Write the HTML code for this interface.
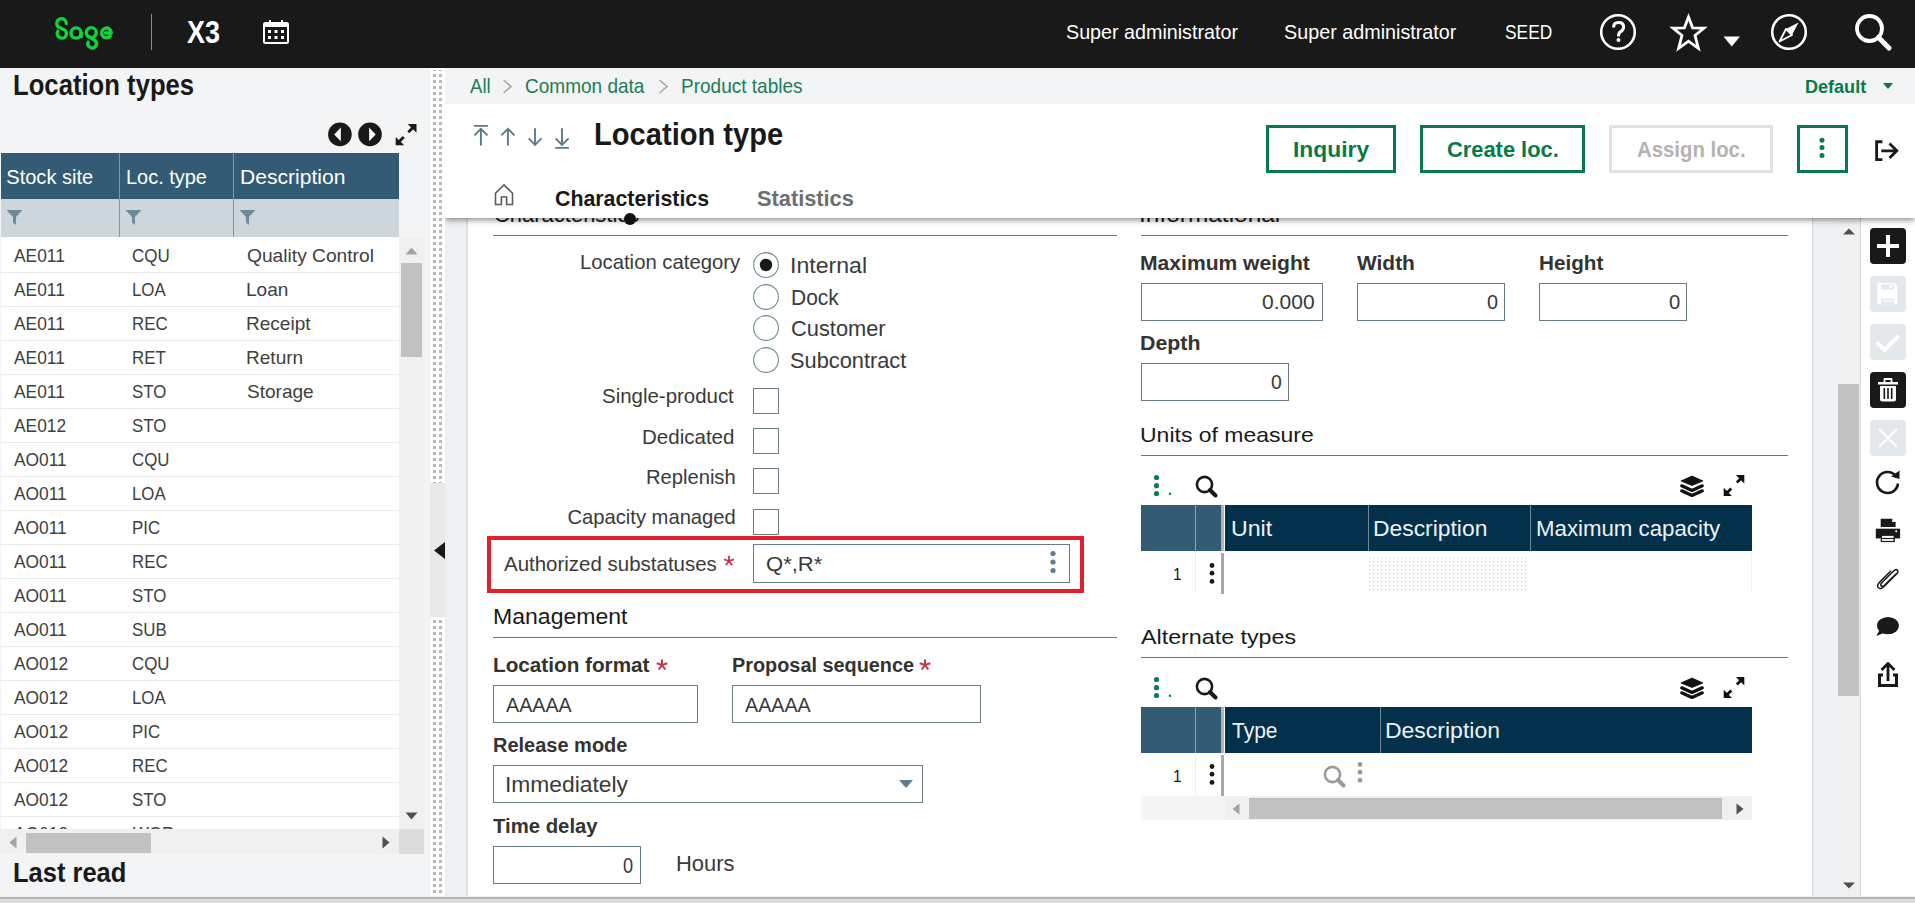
<!DOCTYPE html>
<html><head><meta charset="utf-8">
<style>
*{box-sizing:border-box;margin:0;padding:0}
html,body{width:1915px;height:903px;overflow:hidden;background:#f2f4f5;font-family:"Liberation Sans",sans-serif;color:#333}
.a{position:absolute}
.t{position:absolute;white-space:nowrap;line-height:1;transform-origin:0 0}
#top{left:0;top:0;width:1915px;height:68px;background:#191919}
#top .u{color:#fff;font-size:19px;top:23px}
.lh{color:#fff;font-size:19px;top:16px}
.lr{position:absolute;left:0;width:399px;height:34px;border-bottom:1px solid #ebebeb}
.lr span{position:absolute;top:9px;font-size:17px;line-height:1;color:#333;white-space:nowrap}
.sec{font-size:21px;color:#191919}
.fl{font-size:19.5px;color:#3a3a3a}
.rl{font-size:20px;color:#3a3a3a}
.bl{font-size:19.5px;font-weight:bold;color:#333}
.ast{font-size:24px;font-weight:bold;color:#c7283c}
.cb{width:26px;height:26px;border:1px solid #6c7c84;background:#fff}
.inp{border:1px solid #6c7c84;background:#fff}
.th{font-size:20px;color:#fff}
.rn{font-size:17px;color:#191919}
.bc{font-size:19px;color:#1c7c55}
.btn{border:3px solid #07794a;color:#07794a;font-size:20.5px;font-weight:bold;text-align:center;line-height:42px;background:#fff}
.dis{border-color:#dfe3e6;color:#b3b3b3}
.sb{width:36px;height:36px;border-radius:4px}
.sb svg{display:block}
</style></head><body>
<!-- TOP BAR -->
<div id="top" class="a">
  <svg class="a" style="left:50px;top:12px" width="70" height="42" viewBox="0 0 70 42"><g fill="none" stroke="#0fd53c" stroke-width="3.35" stroke-linecap="round"><path d="M16.3 11.4 A4.8 4.8 0 1 0 8.1 14.8 L15.15 18.35 A4.6 4.6 0 1 1 7.9 19.3"/><circle cx="26" cy="21" r="5.1"/><path d="M31.1 20 V26.3" stroke-linecap="butt"/><circle cx="41.3" cy="20.6" r="4.95"/><path d="M37.8 24.1 L45.24 28.56 A4.3 4.3 0 1 1 38.16 30.13"/><path d="M61.35 20.95 A4.85 4.85 0 1 0 60.2 24.05 M55.6 20.95 H61.35"/></g></svg>
  <div class="a" style="left:151px;top:14px;width:1px;height:36px;background:#8a8a8a"></div>
<div id="tx0" class="t" style="left:186.92px;top:17.16px;font-size:30.52px;font-weight:bold;color:#fff;transform:scaleX(0.8828);">X3</div>
  <svg class="a" style="left:263px;top:19px" width="26" height="26" viewBox="0 0 26 26"><rect x="1" y="4" width="24" height="20" rx="1.5" fill="none" stroke="#fff" stroke-width="2"/><rect x="1" y="4" width="24" height="4" fill="#fff"/><rect x="6" y="1" width="2" height="5" fill="#fff"/><rect x="18" y="1" width="2" height="5" fill="#fff"/><g fill="#fff"><rect x="5" y="11" width="3" height="3"/><rect x="11.5" y="11" width="3" height="3"/><rect x="18" y="11" width="3" height="3"/><rect x="5" y="17" width="3" height="3"/><rect x="11.5" y="17" width="3" height="3"/><rect x="18" y="17" width="3" height="3"/></g></svg>
<div id="tx1" class="t" style="left:1065.74px;top:21.69px;font-size:20.20px;color:#fff;transform:scaleX(0.9761);">Super administrator</div>
<div id="tx2" class="t" style="left:1284.36px;top:21.69px;font-size:20.20px;color:#fff;transform:scaleX(0.9785);">Super administrator</div>
<div id="tx3" class="t" style="left:1505.20px;top:21.69px;font-size:20.20px;color:#fff;transform:scaleX(0.8597);">SEED</div>
</div>

<!-- LEFT PANEL -->
<div id="tx4" class="t" style="left:13.22px;top:70.76px;font-size:28.63px;font-weight:bold;color:#191919;transform:scaleX(0.8968);">Location types</div>
<svg class="a" style="left:327px;top:121px" width="95" height="28" viewBox="0 0 95 28">
 <circle cx="12.9" cy="13.4" r="11.8" fill="#191919"/><path d="M7.2 13.4 L13.8 6.6 L13.8 20.2 Z" fill="#fff"/>
 <circle cx="43" cy="13.4" r="11.8" fill="#191919"/><path d="M48.7 13.4 L42.1 6.6 L42.1 20.2 Z" fill="#fff"/>
 <g fill="#191919"><path d="M89.5 3 L80.7 3 L89.5 11.8 Z"/><path d="M68.7 24.2 L77.2 24.2 L68.7 16 Z"/></g><path d="M86 6.5 L81.3 11.2 M72.3 20.4 L76.8 15.9" stroke="#191919" stroke-width="2.8"/>
</svg>
<div id="lt" class="a" style="left:1px;top:153px;width:398px;height:676px;overflow:hidden;background:#fff">
 <div class="a" style="left:0;top:0;width:398px;height:46px;background:#335b74"></div>
 <div class="a" style="left:0;top:46px;width:398px;height:38px;background:#ccd6dc"></div>
 <div class="a" style="left:118px;top:0;width:1px;height:84px;background:#7e98a8"></div>
 <div class="a" style="left:232px;top:0;width:1px;height:84px;background:#7e98a8"></div>
 <svg class="a" style="left:5px;top:56px" width="17" height="17" viewBox="0 0 17 17"><path d="M0.5 1 H16.5 L10 8 V16 L7 13.5 V8 Z" fill="#6d8a9b"/></svg>
 <svg class="a" style="left:124px;top:56px" width="17" height="17" viewBox="0 0 17 17"><path d="M0.5 1 H16.5 L10 8 V16 L7 13.5 V8 Z" fill="#6d8a9b"/></svg>
 <svg class="a" style="left:238px;top:56px" width="17" height="17" viewBox="0 0 17 17"><path d="M0.5 1 H16.5 L10 8 V16 L7 13.5 V8 Z" fill="#6d8a9b"/></svg>
 <div class="a" style="left:-1px;top:-153px">
<div class="lr" style="top:239px"></div>
<div id="tx5" class="t" style="left:14.46px;top:247.25px;font-size:18.60px;color:#404040;transform:scaleX(0.9335);">AE011</div>
<div id="tx6" class="t" style="left:132.28px;top:247.25px;font-size:18.60px;color:#404040;transform:scaleX(0.9136);">CQU</div>
<div id="tx7" class="t" style="left:246.70px;top:247.25px;font-size:18.60px;color:#404040;transform:scaleX(1.0322);">Quality Control</div>
<div class="lr" style="top:273px"></div>
<div id="tx8" class="t" style="left:14.46px;top:281.25px;font-size:18.60px;color:#404040;transform:scaleX(0.9334);">AE011</div>
<div id="tx9" class="t" style="left:132.18px;top:281.25px;font-size:18.60px;color:#404040;transform:scaleX(0.9050);">LOA</div>
<div id="tx10" class="t" style="left:246.48px;top:281.25px;font-size:18.60px;color:#404040;transform:scaleX(1.0243);">Loan</div>
<div class="lr" style="top:307px"></div>
<div id="tx11" class="t" style="left:14.46px;top:315.25px;font-size:18.60px;color:#404040;transform:scaleX(0.9334);">AE011</div>
<div id="tx12" class="t" style="left:132.18px;top:315.25px;font-size:18.60px;color:#404040;transform:scaleX(0.9050);">REC</div>
<div id="tx13" class="t" style="left:246.48px;top:315.25px;font-size:18.60px;color:#404040;transform:scaleX(1.0243);">Receipt</div>
<div class="lr" style="top:341px"></div>
<div id="tx14" class="t" style="left:14.46px;top:349.25px;font-size:18.60px;color:#404040;transform:scaleX(0.9334);">AE011</div>
<div id="tx15" class="t" style="left:132.18px;top:349.25px;font-size:18.60px;color:#404040;transform:scaleX(0.9050);">RET</div>
<div id="tx16" class="t" style="left:246.48px;top:349.25px;font-size:18.60px;color:#404040;transform:scaleX(1.0243);">Return</div>
<div class="lr" style="top:375px"></div>
<div id="tx17" class="t" style="left:14.46px;top:383.25px;font-size:18.60px;color:#404040;transform:scaleX(0.9334);">AE011</div>
<div id="tx18" class="t" style="left:132.28px;top:383.25px;font-size:18.60px;color:#404040;transform:scaleX(0.9050);">STO</div>
<div id="tx19" class="t" style="left:246.70px;top:383.25px;font-size:18.60px;color:#404040;transform:scaleX(1.0243);">Storage</div>
<div class="lr" style="top:409px"></div>
<div id="tx20" class="t" style="left:14.46px;top:417.25px;font-size:18.60px;color:#404040;transform:scaleX(0.9334);">AE012</div>
<div id="tx21" class="t" style="left:132.28px;top:417.25px;font-size:18.60px;color:#404040;transform:scaleX(0.9050);">STO</div>
<div class="lr" style="top:443px"></div>
<div id="tx22" class="t" style="left:14.46px;top:451.25px;font-size:18.60px;color:#404040;transform:scaleX(0.9334);">AO011</div>
<div id="tx23" class="t" style="left:132.28px;top:451.25px;font-size:18.60px;color:#404040;transform:scaleX(0.9050);">CQU</div>
<div class="lr" style="top:477px"></div>
<div id="tx24" class="t" style="left:14.46px;top:485.25px;font-size:18.60px;color:#404040;transform:scaleX(0.9334);">AO011</div>
<div id="tx25" class="t" style="left:132.18px;top:485.25px;font-size:18.60px;color:#404040;transform:scaleX(0.9050);">LOA</div>
<div class="lr" style="top:511px"></div>
<div id="tx26" class="t" style="left:14.46px;top:519.25px;font-size:18.60px;color:#404040;transform:scaleX(0.9334);">AO011</div>
<div id="tx27" class="t" style="left:132.18px;top:519.25px;font-size:18.60px;color:#404040;transform:scaleX(0.9050);">PIC</div>
<div class="lr" style="top:545px"></div>
<div id="tx28" class="t" style="left:14.46px;top:553.25px;font-size:18.60px;color:#404040;transform:scaleX(0.9334);">AO011</div>
<div id="tx29" class="t" style="left:132.18px;top:553.25px;font-size:18.60px;color:#404040;transform:scaleX(0.9050);">REC</div>
<div class="lr" style="top:579px"></div>
<div id="tx30" class="t" style="left:14.46px;top:587.25px;font-size:18.60px;color:#404040;transform:scaleX(0.9334);">AO011</div>
<div id="tx31" class="t" style="left:132.28px;top:587.25px;font-size:18.60px;color:#404040;transform:scaleX(0.9050);">STO</div>
<div class="lr" style="top:613px"></div>
<div id="tx32" class="t" style="left:14.46px;top:621.25px;font-size:18.60px;color:#404040;transform:scaleX(0.9334);">AO011</div>
<div id="tx33" class="t" style="left:132.28px;top:621.25px;font-size:18.60px;color:#404040;transform:scaleX(0.9050);">SUB</div>
<div class="lr" style="top:647px"></div>
<div id="tx34" class="t" style="left:14.46px;top:655.25px;font-size:18.60px;color:#404040;transform:scaleX(0.9334);">AO012</div>
<div id="tx35" class="t" style="left:132.28px;top:655.25px;font-size:18.60px;color:#404040;transform:scaleX(0.9050);">CQU</div>
<div class="lr" style="top:681px"></div>
<div id="tx36" class="t" style="left:14.46px;top:689.25px;font-size:18.60px;color:#404040;transform:scaleX(0.9334);">AO012</div>
<div id="tx37" class="t" style="left:132.18px;top:689.25px;font-size:18.60px;color:#404040;transform:scaleX(0.9050);">LOA</div>
<div class="lr" style="top:715px"></div>
<div id="tx38" class="t" style="left:14.46px;top:723.25px;font-size:18.60px;color:#404040;transform:scaleX(0.9334);">AO012</div>
<div id="tx39" class="t" style="left:132.18px;top:723.25px;font-size:18.60px;color:#404040;transform:scaleX(0.9050);">PIC</div>
<div class="lr" style="top:749px"></div>
<div id="tx40" class="t" style="left:14.46px;top:757.25px;font-size:18.60px;color:#404040;transform:scaleX(0.9334);">AO012</div>
<div id="tx41" class="t" style="left:132.18px;top:757.25px;font-size:18.60px;color:#404040;transform:scaleX(0.9050);">REC</div>
<div class="lr" style="top:783px"></div>
<div id="tx42" class="t" style="left:14.46px;top:791.25px;font-size:18.60px;color:#404040;transform:scaleX(0.9334);">AO012</div>
<div id="tx43" class="t" style="left:132.28px;top:791.25px;font-size:18.60px;color:#404040;transform:scaleX(0.9050);">STO</div>
<div class="lr" style="top:817px"></div>
<div id="tx44" class="t" style="left:14.46px;top:825.25px;font-size:18.60px;color:#404040;transform:scaleX(0.9334);">AO013</div>
<div id="tx45" class="t" style="left:133.08px;top:825.25px;font-size:18.60px;color:#404040;transform:scaleX(0.9050);">WOR</div>
<div id="tx46" class="t" style="left:6.28px;top:166.82px;font-size:20.06px;color:#fff;">Stock site</div>
<div id="tx47" class="t" style="left:126.02px;top:166.57px;font-size:20.35px;color:#fff;transform:scaleX(0.9802);">Loc. type</div>
<div id="tx48" class="t" style="left:239.96px;top:166.57px;font-size:20.35px;color:#fff;transform:scaleX(1.0365);">Description</div>
 </div>
</div>
<!-- left vscroll -->
<div class="a" style="left:399px;top:238px;width:25px;height:591px;background:#f0f0f0"></div>
<div class="a" style="left:401px;top:263px;width:21px;height:94px;background:#c1c1c1"></div>
<svg class="a" style="left:405px;top:247px" width="13" height="8"><path d="M0.5 7.5 L6.5 0.5 L12.5 7.5Z" fill="#a3a3a3"/></svg>
<svg class="a" style="left:405px;top:812px" width="13" height="8"><path d="M0.5 0.5 L6.5 7.5 L12.5 0.5Z" fill="#505050"/></svg>
<!-- left hscroll -->
<div class="a" style="left:0;top:829px;width:399px;height:25px;background:#f0f0f0"></div>
<div class="a" style="left:399px;top:829px;width:25px;height:25px;background:#dcdcdc"></div>
<div class="a" style="left:26px;top:833px;width:125px;height:20px;background:#c1c1c1"></div>
<svg class="a" style="left:9px;top:836px" width="8" height="13"><path d="M7.5 0.5 L0.5 6.5 L7.5 12.5Z" fill="#a3a3a3"/></svg>
<svg class="a" style="left:382px;top:836px" width="8" height="13"><path d="M0.5 0.5 L7.5 6.5 L0.5 12.5Z" fill="#505050"/></svg>
<div id="tx49" class="t" style="left:13.17px;top:859.25px;font-size:28.05px;font-weight:bold;color:#191919;transform:scaleX(0.9087);">Last read</div>
<div class="a" style="left:0;top:897px;width:1915px;height:6px;background:#dcdcdc;border-top:2px solid #b4b4b4"></div>
<!-- SEPARATOR -->
<svg class="a" style="left:431px;top:68px" width="14" height="828"><defs><pattern id="dp" x="2" y="0" width="6" height="6" patternUnits="userSpaceOnUse"><rect width="3" height="3" fill="#b8b8b8"/></pattern></defs><rect width="14" height="828" fill="#fff"/><rect x="2" y="2" width="9" height="826" fill="url(#dp)"/></svg>
<div class="a" style="left:430px;top:483px;width:15px;height:134px;background:#ebe9e8"></div>
<svg class="a" style="left:434px;top:542px" width="11" height="17"><path d="M0 8.5 L11 0 L11 17Z" fill="#191919"/></svg>


<!-- MAIN -->
<div class="a" style="left:445px;top:218px;width:23px;height:678px;background:#eef1f3;border-right:2px solid #dde1e4"></div>
<div class="a" style="left:468px;top:218px;width:1344px;height:678px;background:#fff"></div>
<div class="a" style="left:1812px;top:218px;width:1px;height:678px;background:#d3d7da"></div>
<div class="a" style="left:1813px;top:218px;width:24px;height:678px;background:#eef2f4"></div>
<div class="a" style="left:1837px;top:218px;width:23px;height:678px;background:#f0f0f0"></div>
<div class="a" style="left:1838px;top:384px;width:21px;height:312px;background:#c1c1c1"></div>
<div class="a" style="left:1860px;top:218px;width:1px;height:678px;background:#d5d5d5"></div>
<div class="a" style="left:1861px;top:218px;width:54px;height:678px;background:#fff"></div>
<svg class="a" style="left:1843px;top:228px" width="12" height="7"><path d="M0 6.5 L6 0.5 L12 6.5Z" fill="#505050"/></svg>
<svg class="a" style="left:1843px;top:882px" width="12" height="7"><path d="M0 0.5 L6 6.5 L12 0.5Z" fill="#505050"/></svg>

<!-- content left column -->
<div id="tx50" class="t" style="left:493.53px;top:204.36px;font-size:21.66px;color:#191919;transform:scaleX(1.0143);">Characteristics</div>
<div class="a" style="left:493px;top:235px;width:624px;height:1px;background:#747474"></div>
<div id="tx51" class="t" style="left:580.47px;top:251.95px;font-size:20.49px;color:#3a3a3a;transform:scaleX(0.9902);">Location category</div>
<svg class="a" style="left:752px;top:251px" width="28" height="124" viewBox="0 0 28 124"><g fill="none" stroke="#6a8792" stroke-width="1.05"><circle cx="14" cy="14" r="12.4"/><circle cx="14" cy="46" r="12.4"/><circle cx="14" cy="77" r="12.4"/><circle cx="14" cy="109" r="12.4"/></g><circle cx="14" cy="14" r="6.2" fill="#191919"/></svg>
<div id="tx52" class="t" style="left:790.08px;top:255.59px;font-size:21.51px;color:#3a3a3a;transform:scaleX(1.0753);">Internal</div>
<div id="tx53" class="t" style="left:790.99px;top:288.29px;font-size:21.51px;color:#3a3a3a;transform:scaleX(0.9744);">Dock</div>
<div id="tx54" class="t" style="left:790.94px;top:319.49px;font-size:21.51px;color:#3a3a3a;transform:scaleX(1.0156);">Customer</div>
<div id="tx55" class="t" style="left:790.36px;top:351.19px;font-size:21.51px;color:#3a3a3a;transform:scaleX(1.0138);">Subcontract</div>
<div id="tx56" class="t" style="left:602.24px;top:385.59px;font-size:20.20px;color:#3a3a3a;transform:scaleX(1.0125);">Single-product</div>
<div id="tx57" class="t" style="left:642.44px;top:426.69px;font-size:20.20px;color:#3a3a3a;transform:scaleX(1.0168);">Dedicated</div>
<div id="tx58" class="t" style="left:645.92px;top:466.59px;font-size:20.20px;color:#3a3a3a;">Replenish</div>
<div id="tx59" class="t" style="left:567.46px;top:507.29px;font-size:20.20px;color:#3a3a3a;">Capacity managed</div>
<div class="a cb" style="left:753px;top:388px"></div>
<div class="a cb" style="left:753px;top:428px"></div>
<div class="a cb" style="left:753px;top:468px"></div>
<div class="a cb" style="left:753px;top:509px"></div>
<div class="a" style="left:487px;top:536px;width:597px;height:57px;border:4.5px solid #e2202b"></div>
<div id="tx60" class="t" style="left:503.50px;top:554.22px;font-size:20.64px;color:#3a3a3a;transform:scaleX(0.9926);">Authorized substatuses</div>
<svg class="a" style="left:721.5px;top:553.6px" width="14" height="14" viewBox="0 0 14 14"><path d="M7.00 7.00 L7.00 1.80 M7.00 7.00 L11.95 5.39 M7.00 7.00 L10.06 11.21 M7.00 7.00 L3.94 11.21 M7.00 7.00 L2.05 5.39 " stroke="#c8344f" stroke-width="1.8" stroke-linecap="butt" fill="none"/></svg>
<div class="a inp" style="left:753px;top:544px;width:317px;height:39px"></div>
<div id="tx61" class="t" style="left:765.74px;top:554.84px;font-size:19.91px;color:#3a3a3a;transform:scaleX(1.1076);">Q*,R*</div>
<svg class="a" style="left:1049px;top:549px" width="8" height="27"><g fill="#5f7e8e"><circle cx="4" cy="4.5" r="2.6"/><circle cx="4" cy="13" r="2.6"/><circle cx="4" cy="21.5" r="2.6"/></g></svg>

<div id="tx62" class="t" style="left:492.56px;top:606.16px;font-size:21.66px;color:#191919;transform:scaleX(1.0639);">Management</div>
<div class="a" style="left:493px;top:637px;width:624px;height:1px;background:#747474"></div>
<div id="tx63" class="t" style="left:493.01px;top:654.68px;font-size:20.93px;font-weight:bold;color:#333;transform:scaleX(0.9900);">Location format</div>
<svg class="a" style="left:655.3px;top:657.9px" width="14" height="14" viewBox="0 0 14 14"><path d="M7.00 7.00 L7.00 1.40 M7.00 7.00 L12.33 5.27 M7.00 7.00 L10.29 11.53 M7.00 7.00 L3.71 11.53 M7.00 7.00 L1.67 5.27 " stroke="#c8344f" stroke-width="2.0" stroke-linecap="butt" fill="none"/></svg>
<div id="tx64" class="t" style="left:731.55px;top:654.68px;font-size:20.93px;font-weight:bold;color:#333;transform:scaleX(0.9489);">Proposal sequence</div>
<svg class="a" style="left:918.3px;top:657.9px" width="14" height="14" viewBox="0 0 14 14"><path d="M7.00 7.00 L7.00 1.40 M7.00 7.00 L12.33 5.27 M7.00 7.00 L10.29 11.53 M7.00 7.00 L3.71 11.53 M7.00 7.00 L1.67 5.27 " stroke="#c8344f" stroke-width="2.0" stroke-linecap="butt" fill="none"/></svg>
<div class="a inp" style="left:493px;top:685px;width:205px;height:38px"></div>
<div class="a inp" style="left:732px;top:685px;width:249px;height:38px"></div>
<div id="tx65" class="t" style="left:506.46px;top:695.32px;font-size:20.64px;color:#3a3a3a;transform:scaleX(0.9561);">AAAAA</div>
<div id="tx66" class="t" style="left:744.54px;top:695.32px;font-size:20.64px;color:#3a3a3a;transform:scaleX(0.9561);">AAAAA</div>
<div id="tx67" class="t" style="left:493.49px;top:734.62px;font-size:20.64px;font-weight:bold;color:#333;transform:scaleX(0.9691);">Release mode</div>
<div class="a inp" style="left:493px;top:765px;width:430px;height:38px"></div>
<div id="tx68" class="t" style="left:504.79px;top:773.74px;font-size:21.80px;color:#3a3a3a;transform:scaleX(1.0461);">Immediately</div>
<svg class="a" style="left:899px;top:780px" width="14" height="8"><path d="M0 0 L14 0 L7 8Z" fill="#5f7e8e"/></svg>
<div id="tx69" class="t" style="left:493.08px;top:816.10px;font-size:20.79px;font-weight:bold;color:#333;transform:scaleX(0.9775);">Time delay</div>
<div class="a inp" style="left:493px;top:846px;width:148px;height:38px"></div>
<div id="tx70" class="t" style="left:623.04px;top:855.61px;font-size:21.37px;color:#3a3a3a;transform:scaleX(0.8500);">0</div>
<div id="tx71" class="t" style="left:675.51px;top:853.49px;font-size:22.09px;color:#3a3a3a;transform:scaleX(0.9940);">Hours</div>

<!-- right column -->
<div id="tx72" class="t" style="left:1139.24px;top:204.36px;font-size:21.66px;color:#191919;transform:scaleX(1.1285);">Informational</div>
<div class="a" style="left:1141px;top:235px;width:647px;height:1px;background:#747474"></div>
<div id="tx73" class="t" style="left:1139.96px;top:252.57px;font-size:20.35px;font-weight:bold;color:#333;transform:scaleX(1.0365);">Maximum weight</div>
<div id="tx74" class="t" style="left:1357.00px;top:252.57px;font-size:20.35px;font-weight:bold;color:#333;transform:scaleX(1.0277);">Width</div>
<div id="tx75" class="t" style="left:1538.52px;top:252.57px;font-size:20.35px;font-weight:bold;color:#333;transform:scaleX(1.0160);">Height</div>
<div class="a inp" style="left:1141px;top:283px;width:182px;height:38px"></div>
<div class="a inp" style="left:1357px;top:283px;width:148px;height:38px"></div>
<div class="a inp" style="left:1539px;top:283px;width:148px;height:38px"></div>
<div id="tx76" class="t" style="left:1262.08px;top:292.00px;font-size:20.79px;color:#3a3a3a;transform:scaleX(1.0107);">0.000</div>
<div id="tx77" class="t" style="left:1486.50px;top:292.00px;font-size:20.79px;color:#3a3a3a;transform:scaleX(0.9545);">0</div>
<div id="tx78" class="t" style="left:1668.92px;top:292.00px;font-size:20.79px;color:#3a3a3a;transform:scaleX(0.9727);">0</div>
<div id="tx79" class="t" style="left:1139.90px;top:333.63px;font-size:19.33px;font-weight:bold;color:#333;transform:scaleX(1.1042);">Depth</div>
<div class="a inp" style="left:1141px;top:363px;width:148px;height:38px"></div>
<div id="tx80" class="t" style="left:1270.92px;top:372.05px;font-size:20.49px;color:#3a3a3a;transform:scaleX(0.9455);">0</div>

<div id="tx81" class="t" style="left:1140.32px;top:425.49px;font-size:20.20px;color:#191919;transform:scaleX(1.1391);">Units of measure</div>
<div class="a" style="left:1141px;top:455px;width:647px;height:1px;background:#747474"></div>

<svg class="a" style="left:1150px;top:474px" width="24" height="24"><g fill="#0a7d4b"><circle cx="6.5" cy="3.5" r="2.6"/><circle cx="6.5" cy="11.7" r="2.6"/><circle cx="6.5" cy="19.5" r="2.6"/><circle cx="20" cy="19.7" r="1.2"/></g></svg>
<svg class="a" style="left:1195px;top:475px" width="23" height="23" viewBox="0 0 23 23"><circle cx="9.5" cy="9.5" r="7.6" fill="none" stroke="#191919" stroke-width="2.6"/><path d="M15 15 L20.5 20.5" stroke="#191919" stroke-width="4" stroke-linecap="round"/></svg>
<svg class="a" style="left:1679px;top:475px" width="26" height="23" viewBox="0 0 26 23"><path d="M1.9 6 L13 1 L24 6 L13 10.5Z" fill="#111" stroke="#111" stroke-width="0.8" stroke-linejoin="round"/><path d="M2.7 10.8 L13 15.5 L23.3 10.8 M2.7 15.8 L13 20.5 L23.3 15.8" fill="none" stroke="#111" stroke-width="3.2" stroke-linecap="round" stroke-linejoin="round"/></svg>
<svg class="a" style="left:1722px;top:474px" width="24" height="24" viewBox="0 0 24 24"><g fill="#111"><path d="M22.3 1.1 L13.9 1.1 L22.3 9.5Z"/><path d="M1.7 22 L9.9 22 L1.7 13.8Z"/></g><path d="M19.2 4.3 L14.9 8.6 M4.9 18.8 L9.3 14.4" stroke="#111" stroke-width="2.8"/></svg>
<div class="a" style="left:1141px;top:505px;width:611px;height:46px;background:#03304b"></div>
<div class="a" style="left:1141px;top:505px;width:54px;height:46px;background:#335b74"></div>
<div class="a" style="left:1196px;top:505px;width:25px;height:46px;background:#335b74"></div>
<div class="a" style="left:1195px;top:505px;width:1px;height:46px;background:#8fa6b4"></div><div class="a" style="left:1221px;top:505px;width:3px;height:46px;background:#b5b5b5"></div><div class="a" style="left:1224px;top:505px;width:1px;height:46px;background:#fff"></div>
<div class="a" style="left:1368px;top:505px;width:1px;height:46px;background:#6f8797"></div>
<div class="a" style="left:1530px;top:505px;width:1px;height:46px;background:#6f8797"></div>
<div id="tx82" class="t" style="left:1230.92px;top:518.69px;font-size:21.51px;color:#eef3f6;transform:scaleX(1.0760);">Unit</div>
<div id="tx83" class="t" style="left:1373.10px;top:518.69px;font-size:21.51px;color:#eef3f6;transform:scaleX(1.0633);">Description</div>
<div id="tx84" class="t" style="left:1536.05px;top:518.69px;font-size:21.51px;color:#eef3f6;transform:scaleX(1.0347);">Maximum capacity</div>
<div class="a" style="left:1195px;top:551px;width:1px;height:42px;background:#eee"></div>
<div class="a" style="left:1751px;top:551px;width:1px;height:42px;background:#eee"></div>
<div id="tx85" class="t" style="left:1173.10px;top:566.48px;font-size:17.15px;color:#191919;transform:scaleX(0.9000);">1</div>
<svg class="a" style="left:1208px;top:561px" width="8" height="25"><g fill="#191919"><circle cx="4" cy="4.5" r="2.4"/><circle cx="4" cy="12.2" r="2.4"/><circle cx="4" cy="20.4" r="2.4"/></g></svg>
<div class="a" style="left:1221px;top:553px;width:3px;height:41px;background:#a8a8a8"></div>
<svg class="a" style="left:1368px;top:556px" width="161" height="35"><defs><pattern id="dots" width="4" height="4" patternUnits="userSpaceOnUse"><rect x="1" y="1" width="1.2" height="1.2" fill="#cfcfcf"/></pattern></defs><rect width="161" height="35" fill="url(#dots)"/></svg>

<div id="tx86" class="t" style="left:1141.00px;top:627.25px;font-size:20.49px;color:#191919;transform:scaleX(1.1352);">Alternate types</div>
<div class="a" style="left:1141px;top:657px;width:647px;height:1px;background:#747474"></div>
<svg class="a" style="left:1150px;top:676px" width="24" height="24"><g fill="#0a7d4b"><circle cx="6.5" cy="3.5" r="2.6"/><circle cx="6.5" cy="11.7" r="2.6"/><circle cx="6.5" cy="19.5" r="2.6"/><circle cx="20" cy="19.7" r="1.2"/></g></svg>
<svg class="a" style="left:1195px;top:677px" width="23" height="23" viewBox="0 0 23 23"><circle cx="9.5" cy="9.5" r="7.6" fill="none" stroke="#191919" stroke-width="2.6"/><path d="M15 15 L20.5 20.5" stroke="#191919" stroke-width="4" stroke-linecap="round"/></svg>
<svg class="a" style="left:1679px;top:677px" width="26" height="23" viewBox="0 0 26 23"><path d="M1.9 6 L13 1 L24 6 L13 10.5Z" fill="#111" stroke="#111" stroke-width="0.8" stroke-linejoin="round"/><path d="M2.7 10.8 L13 15.5 L23.3 10.8 M2.7 15.8 L13 20.5 L23.3 15.8" fill="none" stroke="#111" stroke-width="3.2" stroke-linecap="round" stroke-linejoin="round"/></svg>
<svg class="a" style="left:1722px;top:676px" width="24" height="24" viewBox="0 0 24 24"><g fill="#111"><path d="M22.3 1.1 L13.9 1.1 L22.3 9.5Z"/><path d="M1.7 22 L9.9 22 L1.7 13.8Z"/></g><path d="M19.2 4.3 L14.9 8.6 M4.9 18.8 L9.3 14.4" stroke="#111" stroke-width="2.8"/></svg>
<div class="a" style="left:1141px;top:707px;width:611px;height:46px;background:#03304b"></div>
<div class="a" style="left:1141px;top:707px;width:54px;height:46px;background:#335b74"></div>
<div class="a" style="left:1196px;top:707px;width:25px;height:46px;background:#335b74"></div>
<div class="a" style="left:1195px;top:707px;width:1px;height:46px;background:#8fa6b4"></div><div class="a" style="left:1221px;top:707px;width:3px;height:46px;background:#b5b5b5"></div><div class="a" style="left:1224px;top:707px;width:1px;height:46px;background:#fff"></div>
<div class="a" style="left:1380px;top:707px;width:1px;height:46px;background:#6f8797"></div>
<div id="tx87" class="t" style="left:1231.58px;top:720.34px;font-size:21.80px;color:#eef3f6;transform:scaleX(0.9641);">Type</div>
<div id="tx88" class="t" style="left:1385.11px;top:720.34px;font-size:21.80px;color:#eef3f6;transform:scaleX(1.0542);">Description</div>
<div class="a" style="left:1195px;top:753px;width:1px;height:43px;background:#eee"></div>
<div id="tx89" class="t" style="left:1173.10px;top:768.28px;font-size:17.15px;color:#191919;transform:scaleX(0.9000);">1</div>
<svg class="a" style="left:1208px;top:762px" width="8" height="25"><g fill="#191919"><circle cx="4" cy="4.5" r="2.4"/><circle cx="4" cy="12.2" r="2.4"/><circle cx="4" cy="20.4" r="2.4"/></g></svg>
<div class="a" style="left:1221px;top:755px;width:3px;height:41px;background:#a8a8a8"></div>
<svg class="a" style="left:1323px;top:765px" width="23" height="23" viewBox="0 0 23 23"><circle cx="9.5" cy="9.5" r="7.6" fill="none" stroke="#9a9a9a" stroke-width="2.6"/><path d="M15 15 L20.5 20.5" stroke="#9a9a9a" stroke-width="4" stroke-linecap="round"/></svg>
<svg class="a" style="left:1356px;top:760px" width="8" height="25"><g fill="#9a9a9a"><circle cx="4" cy="4.5" r="2.4"/><circle cx="4" cy="12.2" r="2.4"/><circle cx="4" cy="20.4" r="2.4"/></g></svg>
<div class="a" style="left:1141px;top:796px;width:611px;height:24px;background:#f0f0f0"></div>
<div class="a" style="left:1141px;top:796px;width:84px;height:24px;background:#f5f5f5"></div>
<div class="a" style="left:1249px;top:798px;width:473px;height:21px;background:#c1c1c1"></div>
<svg class="a" style="left:1232px;top:803px" width="8" height="12"><path d="M7.5 0.5 L0.5 6 L7.5 11.5Z" fill="#a3a3a3"/></svg>
<svg class="a" style="left:1736px;top:803px" width="8" height="12"><path d="M0.5 0.5 L7.5 6 L0.5 11.5Z" fill="#505050"/></svg>


<!-- BREADCRUMB + HEADER -->
<div class="a" style="left:445px;top:68px;width:1470px;height:36px;background:#f2f4f5"></div>
<div id="tx90" class="t" style="left:469.92px;top:77.39px;font-size:19.62px;color:#1c7c55;transform:scaleX(0.9466);">All</div>
<svg class="a" style="left:502px;top:79px" width="11" height="15"><path d="M1.5 1 L9 7.5 L1.5 14" fill="none" stroke="#a8a8a8" stroke-width="1.6"/></svg>
<div id="tx91" class="t" style="left:525.03px;top:77.39px;font-size:19.62px;color:#1c7c55;transform:scaleX(0.9693);">Common data</div>
<svg class="a" style="left:658px;top:79px" width="11" height="15"><path d="M1.5 1 L9 7.5 L1.5 14" fill="none" stroke="#a8a8a8" stroke-width="1.6"/></svg>
<div id="tx92" class="t" style="left:681.03px;top:77.39px;font-size:19.62px;color:#1c7c55;transform:scaleX(0.9699);">Product tables</div>
<div id="tx93" class="t" style="left:1805.11px;top:78.25px;font-size:18.60px;font-weight:bold;color:#07794a;transform:scaleX(0.9705);">Default</div>
<svg class="a" style="left:1883px;top:83px" width="10" height="6"><path d="M0 0 L10 0 L5 6Z" fill="#07794a"/></svg>

<div class="a" style="left:445px;top:104px;width:1470px;height:114px;background:#fff;box-shadow:0 2px 6px rgba(0,0,0,0.46);clip-path:inset(0 0 -14px 0)"></div>
<svg class="a" style="left:470px;top:122px" width="104" height="28" viewBox="0 0 104 28"><g fill="none" stroke="#5b7a8a" stroke-width="1.9"><path d="M4 3.9 H17.9 M10.9 6.8 V23.6 M4.4 13.4 L10.9 6.8 L17.5 13.4"/><path d="M37.9 6.8 V23.6 M31.3 13.4 L37.9 6.8 L44.5 13.4"/><path d="M65 6.2 V23 M58.7 16.4 L65 23 L71.5 16.4"/><path d="M92 6.2 V23 M85.6 16.4 L92 23 L98.6 16.4 M85.1 25.9 H98.9"/></g></svg>
<div id="tx94" class="t" style="left:594.22px;top:119.34px;font-size:31.25px;font-weight:bold;color:#191919;transform:scaleX(0.9315);">Location type</div>
<div class="a btn" style="left:1266px;top:125px;width:130px;height:48px"></div><div id="tx95" class="t" style="left:1293.43px;top:139.49px;font-size:22.09px;font-weight:bold;color:#07794a;transform:scaleX(1.0340);">Inquiry</div>
<div class="a btn" style="left:1420px;top:125px;width:165px;height:48px"></div><div id="tx96" class="t" style="left:1447.28px;top:139.49px;font-size:22.09px;font-weight:bold;color:#07794a;transform:scaleX(0.9901);">Create loc.</div>
<div class="a btn dis" style="left:1609px;top:125px;width:164px;height:48px"></div><div id="tx97" class="t" style="left:1637.00px;top:139.49px;font-size:22.09px;font-weight:bold;color:#b3b3b3;transform:scaleX(0.9220);">Assign loc.</div>
<div class="a btn" style="left:1797px;top:125px;width:51px;height:48px"></div>
<svg class="a" style="left:1817px;top:136px" width="10" height="24"><g fill="#07794a"><circle cx="5" cy="4.2" r="2.5"/><circle cx="5" cy="11.5" r="2.5"/><circle cx="5" cy="19.4" r="2.5"/></g></svg>
<svg class="a" style="left:1873px;top:139px" width="28" height="24" viewBox="0 0 28 24"><path d="M9.4 2.75 H3.6 V20.65 H9.4" fill="none" stroke="#191919" stroke-width="2.8"/><path d="M8.3 11.8 H24 M16.5 4.5 L23.8 11.8 L16.5 19.1" fill="none" stroke="#191919" stroke-width="2.8"/></svg>
<svg class="a" style="left:494px;top:184px" width="20" height="22" viewBox="0 0 20 22"><path d="M1.5 20.5 V9.3 L10 0.9 L18.5 9.3 V20.5 H12.6 V13 H7.4 V20.5 Z" fill="none" stroke="#5a5a5a" stroke-width="1.6"/></svg>
<div id="tx98" class="t" style="left:554.52px;top:187.83px;font-size:21.22px;font-weight:bold;color:#191919;transform:scaleX(1.0048);">Characteristics</div>
<div id="tx99" class="t" style="left:757.00px;top:187.83px;font-size:21.22px;font-weight:bold;color:#6b6f72;transform:scaleX(1.0263);">Statistics</div>
<div class="a" style="left:624px;top:213px;width:12px;height:12px;border-radius:50%;background:#111"></div>

<!-- SIDEBAR -->
<div class="a sb" style="left:1870px;top:228px;background:#191919"><svg width="36" height="36"><path d="M18 7 V29 M7 18 H29" stroke="#fff" stroke-width="4"/></svg></div>
<div class="a sb" style="left:1870px;top:276px;background:#e3e8eb"><svg width="36" height="36" viewBox="0 0 36 36"><path d="M7.4 7.1 H24.4 L27.4 10.1 V28.2 H7.4 Z" fill="#fff"/><rect x="11" y="8.3" width="13" height="5.2" fill="#e3e8eb"/><rect x="19.6" y="9.3" width="2.6" height="2.6" fill="#fff"/><rect x="11" y="22.6" width="13" height="5.6" fill="#e3e8eb"/><rect x="12" y="24.3" width="11" height="1.3" fill="#fff"/></svg></div>
<div class="a sb" style="left:1870px;top:324px;background:#e3e8eb"><svg width="36" height="36" viewBox="0 0 36 36"><path d="M6.8 18.4 L14.5 26 L28.6 11.9" fill="none" stroke="#fff" stroke-width="4"/></svg></div>
<div class="a sb" style="left:1870px;top:372px;background:#191919"><svg width="36" height="36" viewBox="0 0 36 36"><path d="M8 10 H28 V12.5 H8Z" fill="#fff"/><path d="M14.5 10 V7 H21.5 V10" fill="none" stroke="#fff" stroke-width="1.8"/><path d="M10 14 H26 V27 Q26 29.5 23.5 29.5 H12.5 Q10 29.5 10 27Z" fill="#fff"/><path d="M14.3 16 V27 M18 16 V27 M21.7 16 V27" stroke="#191919" stroke-width="1.6"/></svg></div>
<div class="a sb" style="left:1870px;top:420px;background:#e3e8eb"><svg width="36" height="36"><path d="M9 9 L27 27 M27 9 L9 27" stroke="#fff" stroke-width="2"/></svg></div>
<svg class="a" style="left:1874px;top:469px" width="28" height="27" viewBox="0 0 28 27"><path d="M22.5 8 A10.5 10.5 0 1 0 24 14.5" fill="none" stroke="#191919" stroke-width="2.6"/><path d="M17 7.5 L25.5 1.5 L25.5 10Z" fill="#191919"/></svg>
<svg class="a" style="left:1875px;top:518px" width="26" height="25" viewBox="0 0 26 25"><path d="M5.7 0.7 H17.2 L20.6 4.1 V9 H5.7Z" fill="#191919"/><path d="M17.2 0.7 V4.1 H20.6" fill="#fff"/><rect x="0.8" y="10.7" width="24.3" height="9.7" fill="#191919"/><circle cx="21.2" cy="13.2" r="1" fill="#fff"/><rect x="5.7" y="16.6" width="14.2" height="7.5" fill="#191919"/><rect x="7" y="17.9" width="11.6" height="2" fill="#fff"/><rect x="7" y="21.1" width="11.6" height="1.8" fill="#fff"/></svg>
<svg class="a" style="left:1876px;top:566px" width="24" height="25" viewBox="0 0 24 25"><path d="M19.6 8.2 L8.2 19.6 Q6.6 21.2 5.3 19.9 Q4 18.6 5.6 17 L17.3 5.3 Q19.9 2.7 21.4 4.2 Q22.9 5.7 20.3 8.3 L8.3 20.3 Q4.6 24 2.4 21.8 Q0.2 19.6 3.9 15.9 L14.6 5.2" fill="none" stroke="#191919" stroke-width="1.5" stroke-linecap="round"/></svg>
<svg class="a" style="left:1874px;top:615px" width="27" height="23" viewBox="0 0 27 23"><ellipse cx="14" cy="10.6" rx="11" ry="8.6" fill="#191919"/><path d="M5.5 15 L2.3 21 L11 17.5Z" fill="#191919"/></svg>
<svg class="a" style="left:1877px;top:662px" width="22" height="26" viewBox="0 0 22 26"><path d="M11 2 V19 M4.5 8 L11 1.5 L17.5 8" fill="none" stroke="#191919" stroke-width="2.8"/><path d="M6 13 H2.5 V23.5 H19.5 V13 H16" fill="none" stroke="#191919" stroke-width="3"/></svg>

<!-- TOP ICONS -->
<svg class="a" style="left:1598px;top:12px" width="40" height="40" viewBox="0 0 40 40"><circle cx="20" cy="20" r="16.8" fill="none" stroke="#fff" stroke-width="2.6"/><path d="M15.6 15.4 Q15.6 10.6 20.6 10.6 Q25.6 10.6 25.6 15 Q25.6 18 22.3 19.9 Q20.5 21 20.5 24.4" fill="none" stroke="#fff" stroke-width="3"/><circle cx="20.5" cy="28" r="2" fill="#fff"/></svg>
<svg class="a" style="left:1669px;top:13px" width="40" height="40" viewBox="0 0 40 40"><path d="M19.5 4 L23.6 14.8 L35 15 L26 22.4 L29.4 35.4 L19.5 28.2 L9.6 35.4 L13 22.4 L4 15 L15.4 14.8 Z" fill="none" stroke="#fff" stroke-width="2.8" stroke-linejoin="miter"/></svg>
<svg class="a" style="left:1723px;top:36px" width="18" height="11"><path d="M0.5 0.5 L17 0.5 L8.75 10.5Z" fill="#fff"/></svg>
<svg class="a" style="left:1769px;top:12px" width="40" height="40" viewBox="0 0 40 40"><circle cx="20" cy="20" r="16.8" fill="none" stroke="#fff" stroke-width="2.6"/><path d="M29.5 10.5 L23 23 L17 17 Z" fill="#fff"/><path d="M10.5 29.5 L23 23 L17 17 Z" fill="none" stroke="#fff" stroke-width="1.8" stroke-linejoin="round"/></svg>
<svg class="a" style="left:1852px;top:12px" width="42" height="40" viewBox="0 0 42 40"><circle cx="17.5" cy="16.5" r="12.5" fill="none" stroke="#fff" stroke-width="3.8"/><path d="M26.5 25.5 L37 36" stroke="#fff" stroke-width="5" stroke-linecap="round"/></svg>

</body></html>
